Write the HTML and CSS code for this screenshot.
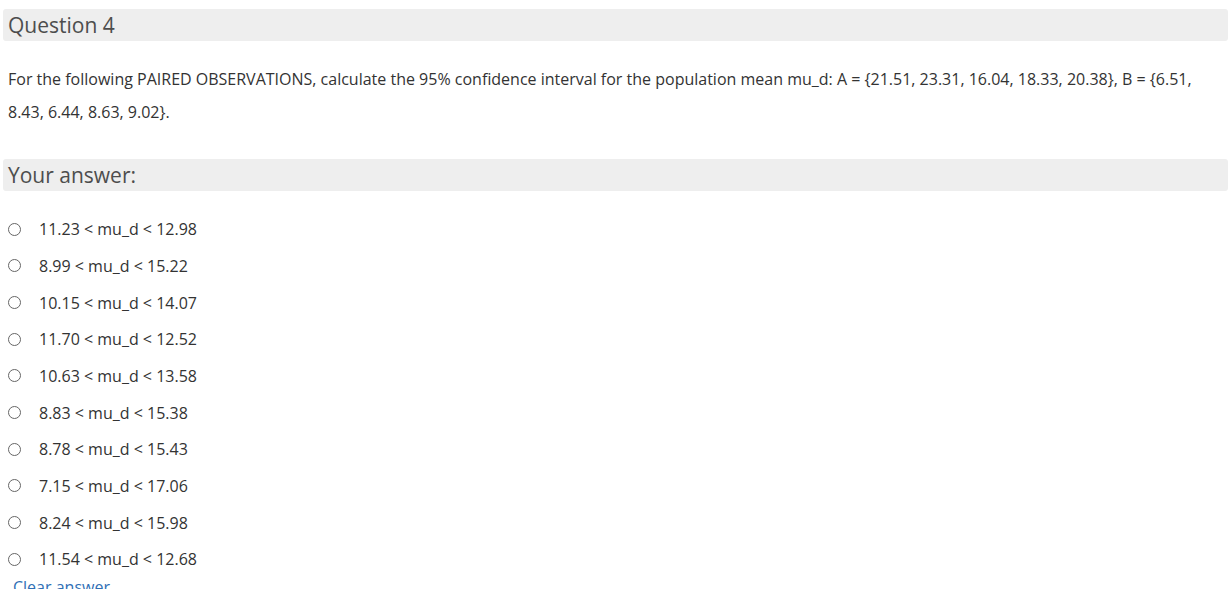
FILE: index.html
```html
<!DOCTYPE html>
<html>
<head>
<meta charset="utf-8">
<link rel="stylesheet" href="styles.css">
</head>
<body>
<div class="page">
  <div class="bar q-title">Question 4</div>
  <p class="prompt">For the following PAIRED OBSERVATIONS, calculate the 95% confidence interval for the population mean mu_d: A = {21.51, 23.31, 16.04, 18.33, 20.38}, B = {6.51, 8.43, 6.44, 8.63, 9.02}.</p>
  <div class="bar a-title">Your answer:</div>
  <ul class="options">
    <li class="opt"><span class="radio"></span><span class="label">11.23 &lt; mu_d &lt; 12.98</span></li>
    <li class="opt"><span class="radio"></span><span class="label">8.99 &lt; mu_d &lt; 15.22</span></li>
    <li class="opt"><span class="radio"></span><span class="label">10.15 &lt; mu_d &lt; 14.07</span></li>
    <li class="opt"><span class="radio"></span><span class="label">11.70 &lt; mu_d &lt; 12.52</span></li>
    <li class="opt"><span class="radio"></span><span class="label">10.63 &lt; mu_d &lt; 13.58</span></li>
    <li class="opt"><span class="radio"></span><span class="label">8.83 &lt; mu_d &lt; 15.38</span></li>
    <li class="opt"><span class="radio"></span><span class="label">8.78 &lt; mu_d &lt; 15.43</span></li>
    <li class="opt"><span class="radio"></span><span class="label">7.15 &lt; mu_d &lt; 17.06</span></li>
    <li class="opt"><span class="radio"></span><span class="label">8.24 &lt; mu_d &lt; 15.98</span></li>
    <li class="opt"><span class="radio"></span><span class="label">11.54 &lt; mu_d &lt; 12.68</span></li>
  </ul>
  <a class="clear" href="#">Clear answer</a>
</div>
</body>
</html>
```
FILE: styles.css
```css
html, body {
  margin: 0;
  padding: 0;
  background: #fff;
  overflow: hidden;
}
body {
  font-family: "Open Sans", "Liberation Sans", sans-serif;
  color: #333;
  font-size: 16px;
}
.page {
  padding: 9px 1px 0 3px;
}
.bar {
  background: #eeeeee;
  border-radius: 3px;
  height: 32px;
  line-height: 32px;
  padding-left: 5px;
  font-size: 21px;
  color: #4d4d4d;
}
.prompt {
  margin: 22px 0 0 0;
  padding-left: 5px;
  line-height: 33px;
  color: #333;
}
.a-title {
  margin-top: 30px;
}
.options {
  list-style: none;
  margin: 20px 0 0 0;
  padding: 0;
}
.opt {
  display: flex;
  align-items: center;
  height: 36.667px;
}
.radio {
  width: 11px;
  height: 11px;
  border: 1px solid #666;
  border-radius: 50%;
  margin-left: 5px;
  margin-right: 18px;
  box-sizing: content-box;
}
.label {
  color: #333;
}
.clear {
  display: block;
  margin-top: -2px;
  padding-left: 10px;
  color: #2f6fb5;
  text-decoration: none;
  font-size: 16px;
}
```
